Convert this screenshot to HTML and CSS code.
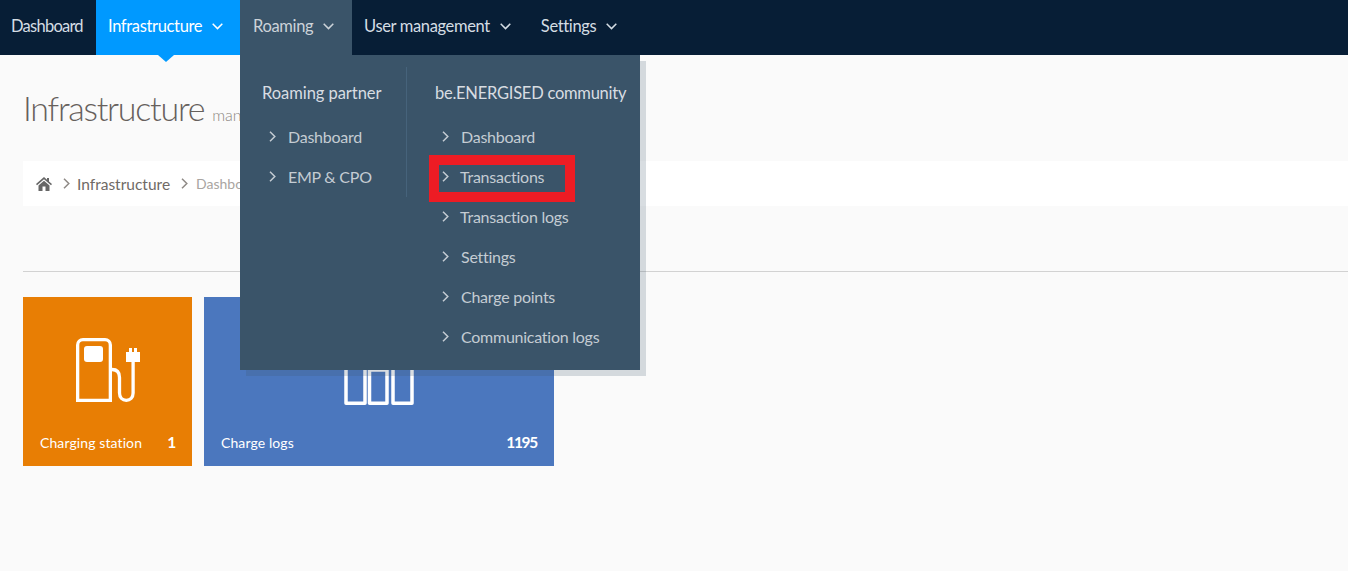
FILE: index.html
```html
<!DOCTYPE html>
<html lang="en">
<head>
<meta charset="utf-8">
<title>Infrastructure</title>
<link rel="stylesheet" href="styles.css">
</head>
<body>
<nav class="nav">
  <a class="nav-item nav-first">Dashboard</a>
  <a class="nav-item nav-active">Infrastructure<svg class="caret" viewBox="0 0 11 7"><path d="M.7.8 5.500 5.600 10.300.8"/></svg><span class="notch"></span></a>
  <div class="nav-item nav-open">Roaming<svg class="caret" viewBox="0 0 11 7"><path d="M.7.8 5.500 5.600 10.300.8"/></svg>
    <div class="mega">
      <div class="mega-col mega-left">
        <h3 class="mega-title">Roaming partner</h3>
        <a class="mega-link"><svg class="chev" viewBox="0 0 7 11"><path d="M1 .8 5.800 5.500 1 10.200"/></svg>Dashboard</a>
        <a class="mega-link"><svg class="chev" viewBox="0 0 7 11"><path d="M1 .8 5.800 5.500 1 10.200"/></svg>EMP &amp; CPO</a>
      </div>
      <div class="mega-col mega-right">
        <h3 class="mega-title">be.ENERGISED community</h3>
        <a class="mega-link"><svg class="chev" viewBox="0 0 7 11"><path d="M1 .8 5.800 5.500 1 10.200"/></svg>Dashboard</a>
        <a class="mega-link mega-marked"><svg class="chev" viewBox="0 0 7 11"><path d="M1 .8 5.800 5.500 1 10.200"/></svg>Transactions</a>
        <a class="mega-link mega-tight"><svg class="chev" viewBox="0 0 7 11"><path d="M1 .8 5.800 5.500 1 10.200"/></svg>Transaction logs</a>
        <a class="mega-link"><svg class="chev" viewBox="0 0 7 11"><path d="M1 .8 5.800 5.500 1 10.200"/></svg>Settings</a>
        <a class="mega-link"><svg class="chev" viewBox="0 0 7 11"><path d="M1 .8 5.800 5.500 1 10.200"/></svg>Charge points</a>
        <a class="mega-link"><svg class="chev" viewBox="0 0 7 11"><path d="M1 .8 5.800 5.500 1 10.200"/></svg>Communication logs</a>
      </div>
    </div>
  </div>
  <a class="nav-item nav-plain">User management<svg class="caret" viewBox="0 0 11 7"><path d="M.7.8 5.500 5.600 10.300.8"/></svg></a>
  <a class="nav-item nav-plain">Settings<svg class="caret" viewBox="0 0 11 7"><path d="M.7.8 5.500 5.600 10.300.8"/></svg></a>
</nav>
<main class="page">
  <h1 class="title">Infrastructure <small class="subtitle">management</small></h1>
  <div class="crumbs">
    <svg class="home" viewBox="0 0 16 14"><path d="M8 0 0 7l1 1.200L8 2.300l7 5.900L16 7l-3-2.600V1h-2v1.700zM2.500 8.500V14H6.500V9.500h3V14h4V8.500L8 3.800z"/></svg>
    <svg class="crumb-sep" viewBox="0 0 7 11"><path d="M1 .8 5.800 5.500 1 10.200"/></svg>
    <span class="crumb">Infrastructure</span>
    <svg class="crumb-sep" viewBox="0 0 7 11"><path d="M1 .8 5.800 5.500 1 10.200"/></svg>
    <span class="crumb-current">Dashboard</span>
  </div>
  <hr class="rule">
  <div class="cards">
    <div class="card card-orange">
      <svg class="icon-station" viewBox="0 0 64 64">
        <path class="fill" fill-rule="evenodd" d="M0 64V7a7 7 0 0 1 7-7h22a7 7 0 0 1 7 7v57zM3.300 60.700h29.400V7A3.700 3.700 0 0 0 29 3.300H7A3.700 3.700 0 0 0 3.300 7z"/>
        <rect class="fill" x="8" y="8" width="19" height="16" rx="3"/>
        <path class="line" d="M36 31.500c5 0 7.500 3 7.500 8v15.500c0 4.500 3 7.300 6.800 7.300s6.800-2.800 6.800-7.300V24"/>
        <path class="fill" d="M50 14h3v-4h3v4h2v-4h3v4h3v10H50z"/>
      </svg>
      <div class="card-foot"><span>Charging station</span><b class="count">1</b></div>
    </div>
    <div class="card card-blue">
      <svg class="icon-logs" viewBox="0 0 70 68">
        <path class="bar" d="M2 8h19v58.200H2zM25.500 33h17.500v33.200H25.500zM49 8h19v58.200H49z"/>
      </svg>
      <div class="card-foot"><span>Charge logs</span><b class="count">1195</b></div>
    </div>
  </div>
</main>
</body>
</html>
```
FILE: styles.css
```css
*, *::before, *::after { box-sizing: border-box; }
html, body { margin: 0; height: 100%; }
body {
  background: #fafafa;
  font-family: "Lato", "Noto Sans", sans-serif;
  overflow: hidden;
}
svg { display: block; }

.nav {
  display: flex;
  height: 55px;
  background: #071e36;
  font-size: 16.500px;
  letter-spacing: -.35px;
  color: #d4dde4;
  position: relative;
  z-index: 2;
}
.nav-item {
  display: flex;
  align-items: center;
  gap: 10px;
  height: 55px;
  padding: 0 18px 3px 12px;
  position: relative;
  white-space: nowrap;
}
.nav-first { width: 96px; padding-left: 11px; letter-spacing: -.75px; }
.nav-active { width: 144px; background: #0099ff; color: #fff; }
.nav-open { width: 112px; background: #3a5469; padding-left: 13px; color: #ccd3d9; }
.caret { width: 11px; height: 7px; flex: none; }
.caret path, .chev path, .crumb-sep path {
  fill: none;
  stroke: currentColor;
  stroke-width: 1.500;
}
.notch {
  position: absolute;
  left: 62px;
  top: 55px;
  width: 0;
  height: 0;
  border-left: 8px solid transparent;
  border-right: 8px solid transparent;
  border-top: 7px solid #0099ff;
}

.mega {
  position: absolute;
  left: 0;
  top: 55px;
  width: 400px;
  height: 315px;
  background: #3a5469;
  box-shadow: 6px 6px 0 rgba(58, 84, 105, .2);
  display: flex;
  align-items: flex-start;
  padding-top: 12px;
  font-size: 16px;
  letter-spacing: -.25px;
}
.mega-col { display: flex; flex-direction: column; padding-top: 12px; }
.mega-left {
  width: 167px;
  height: 130px;
  border-right: 1px solid #46637b;
  padding-left: 22px;
}
.mega-right { padding-left: 28px; }
.mega-title {
  margin: 0;
  height: 37px;
  line-height: 28px;
  font-size: 16.500px;
  letter-spacing: -.05px;
  font-weight: 400;
  color: #d8dde2;
}
.mega-right .mega-title { letter-spacing: -.25px; }
.mega-link {
  display: flex;
  align-items: center;
  gap: 12px;
  height: 40px;
  padding-left: 7px;
  color: #c4ccd3;
}
.mega-marked, .mega-tight { gap: 11px; }
.chev { width: 7px; height: 11px; flex: none; }
.mega-marked { position: relative; }
.mega-marked::after {
  content: "";
  position: absolute;
  left: -6px;
  top: -1px;
  width: 146px;
  height: 47px;
  border: 10px solid #ed1c24;
}

.page { padding: 0 0 0 23px; }
.title {
  margin: 0;
  padding-top: 33px;
  height: 106px;
  font-size: 34px;
  line-height: 40px;
  font-weight: 300;
  letter-spacing: -1.250px;
  color: #66605c;
  white-space: nowrap;
}
.subtitle { font-size: 16px; letter-spacing: 0; color: #8a8580; font-weight: 300; }
.crumbs {
  display: flex;
  align-items: center;
  height: 45px;
  background: #fff;
  padding-left: 13px;
  gap: 8px;
  font-size: 15.500px;
  color: #6f6a66;
}
.home { width: 16px; height: 14px; fill: #666; }
.crumb-sep { width: 7px; height: 11px; margin-left: 3px; color: #8f8a86; }
.crumb { margin-left: -1px; }
.crumb-current { color: #a9a5a1; font-size: 14px; }
.rule {
  margin: 65px 0 25px;
  border: 0;
  border-top: 1px solid #d2d2d2;
}

.cards { display: flex; gap: 12px; }
.card {
  height: 169px;
  color: #fff;
  display: flex;
  flex-direction: column;
  align-items: center;
  justify-content: space-between;
}
.card-orange { width: 169px; background: #e87e04; padding-top: 41px; }
.card-blue { width: 350px; background: #4b77be; padding-top: 40px; }
.icon-station { width: 64px; height: 64px; flex: none; }
.icon-station .line { fill: none; stroke: #fff; stroke-width: 3.300; }
.icon-station .fill { fill: #fff; }
.icon-logs { width: 70px; height: 68px; flex: none; }
.bar { fill: none; stroke: #fff; stroke-width: 3.500; stroke-linejoin: round; }
.card-foot {
  width: 100%;
  display: flex;
  justify-content: space-between;
  align-items: center;
  padding: 0 17px 2px;
  height: 46px;
  font-size: 14px;
  letter-spacing: .1px;
}
.count { font-size: 15.500px; letter-spacing: -1.300px; font-weight: 700; }
```
